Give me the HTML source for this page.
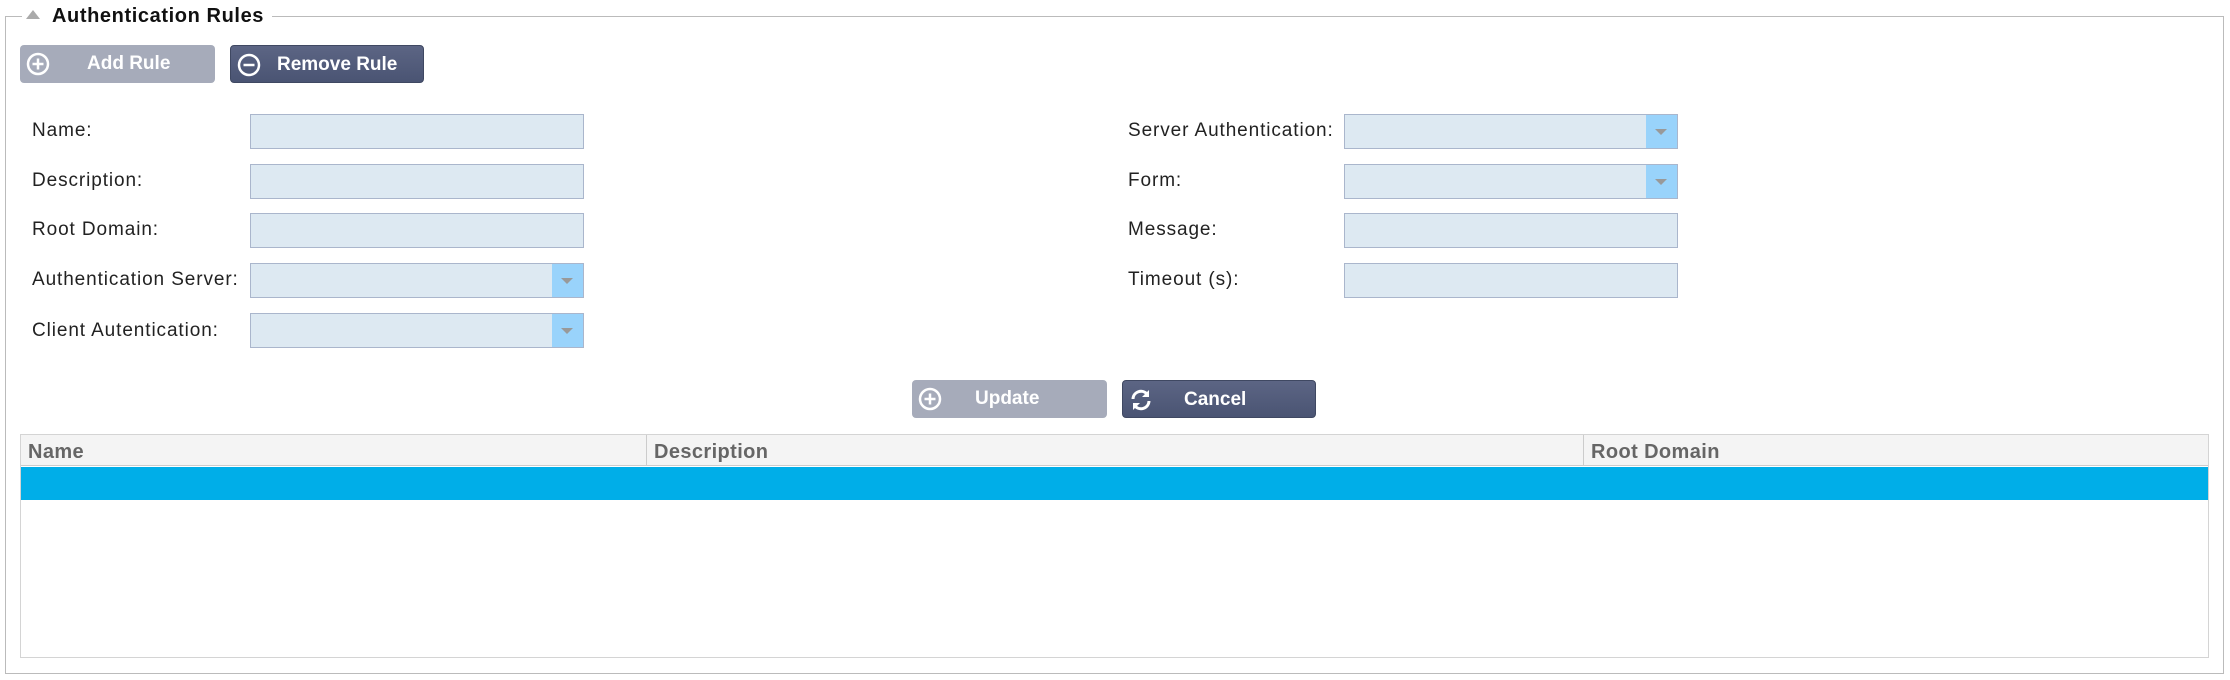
<!DOCTYPE html>
<html><head><style>
*{box-sizing:border-box;margin:0;padding:0}
body{width:2230px;height:680px;background:#fff;font-family:"Liberation Sans",sans-serif;position:relative;overflow:hidden}
.a{position:absolute}
.fs{left:5px;top:16px;width:2219px;height:658px;border:1px solid #bbb}
.lg{left:22px;top:2px;background:#fff;padding:0 8px 0 4px;font-size:20px;font-weight:bold;color:#111;height:28px;line-height:28px;letter-spacing:0.6px}
.tri{display:inline-block;width:0;height:0;border-left:7px solid transparent;border-right:7px solid transparent;border-bottom:9px solid #aaa;margin-right:12px;vertical-align:3px}
.btn{height:38px;border-radius:4px;color:#fff;font-weight:bold;font-size:19px;line-height:38px}
.btn svg{position:absolute;left:6px;top:7px}
.g{background:#a6abba}
.d{background:linear-gradient(#5c6584,#4a5473);border:1px solid #3f4862}
.btn span{position:absolute;top:0}
.lb{font-size:19px;color:#222;line-height:20px;letter-spacing:0.9px}
.in{width:334px;height:35px;background:#dde9f2;border:1px solid #aab6cc}
.dd::after{content:"";position:absolute;right:0;top:0;width:31px;height:33px;background:#99d3fb}
.dd::before{content:"";position:absolute;right:10px;top:14px;border-left:6px solid transparent;border-right:6px solid transparent;border-top:6px solid #999;z-index:2}
.tb{left:20px;top:434px;width:2189px;height:224px;border:1px solid #d4d4d4}
.hd{position:absolute;left:0;top:0;width:100%;height:31px;background:#f4f4f4;border-bottom:1px solid #ccc}
.hd div{position:absolute;top:0;height:31px;line-height:35px;font-size:20px;font-weight:bold;color:#666;padding-left:7px;letter-spacing:0.4px}
.sel{position:absolute;left:0;top:32px;width:100%;height:33px;background:#00aee8}
</style></head><body>
<div class="a fs"></div>
<div class="a lg"><span class="tri"></span>Authentication Rules</div>

<div class="a btn g" style="left:20px;top:45px;width:195px"><svg width="24" height="24" viewBox="0 0 24 24"><circle cx="12" cy="12" r="10" fill="none" stroke="#fff" stroke-width="2.5"/><path d="M12 6.5v11M6.5 12h11" stroke="#fff" stroke-width="2.5"/></svg><span style="left:67px">Add Rule</span></div>
<div class="a btn d" style="left:230px;top:45px;width:194px"><svg width="24" height="24" viewBox="0 0 24 24"><circle cx="12" cy="12" r="10" fill="none" stroke="#fff" stroke-width="2.5"/><path d="M6.5 12h11" stroke="#fff" stroke-width="2.5"/></svg><span style="left:46px">Remove Rule</span></div>

<div class="a lb" style="left:32px;top:121px">Name:</div>
<div class="a lb" style="left:32px;top:171px">Description:</div>
<div class="a lb" style="left:32px;top:220px">Root Domain:</div>
<div class="a lb" style="left:32px;top:270px">Authentication Server:</div>
<div class="a lb" style="left:32px;top:321px">Client Autentication:</div>
<div class="a in" style="left:250px;top:114px"></div>
<div class="a in" style="left:250px;top:164px"></div>
<div class="a in" style="left:250px;top:213px"></div>
<div class="a in dd" style="left:250px;top:263px"></div>
<div class="a in dd" style="left:250px;top:313px"></div>

<div class="a lb" style="left:1128px;top:121px">Server Authentication:</div>
<div class="a lb" style="left:1128px;top:171px">Form:</div>
<div class="a lb" style="left:1128px;top:220px">Message:</div>
<div class="a lb" style="left:1128px;top:270px">Timeout (s):</div>
<div class="a in dd" style="left:1344px;top:114px"></div>
<div class="a in dd" style="left:1344px;top:164px"></div>
<div class="a in" style="left:1344px;top:213px"></div>
<div class="a in" style="left:1344px;top:263px"></div>

<div class="a btn g" style="left:912px;top:380px;width:195px"><svg width="24" height="24" viewBox="0 0 24 24"><circle cx="12" cy="12" r="10" fill="none" stroke="#fff" stroke-width="2.5"/><path d="M12 6.5v11M6.5 12h11" stroke="#fff" stroke-width="2.5"/></svg><span style="left:63px">Update</span></div>
<div class="a btn d" style="left:1122px;top:380px;width:194px"><svg width="24" height="24" viewBox="0 0 24 24"><path d="M4 11a8 8 0 0 1 14-5" fill="none" stroke="#fff" stroke-width="3"/><path d="M20 2v7h-7z" fill="#fff"/><path d="M20 13a8 8 0 0 1-14 5" fill="none" stroke="#fff" stroke-width="3"/><path d="M4 22v-7h7z" fill="#fff"/></svg><span style="left:61px">Cancel</span></div>

<div class="a tb">
<div class="hd"><div style="left:0">Name</div><div style="left:625px;border-left:1px solid #ccc">Description</div><div style="left:1562px;border-left:1px solid #ccc">Root Domain</div></div>
<div class="sel"></div>
</div>
</body></html>
